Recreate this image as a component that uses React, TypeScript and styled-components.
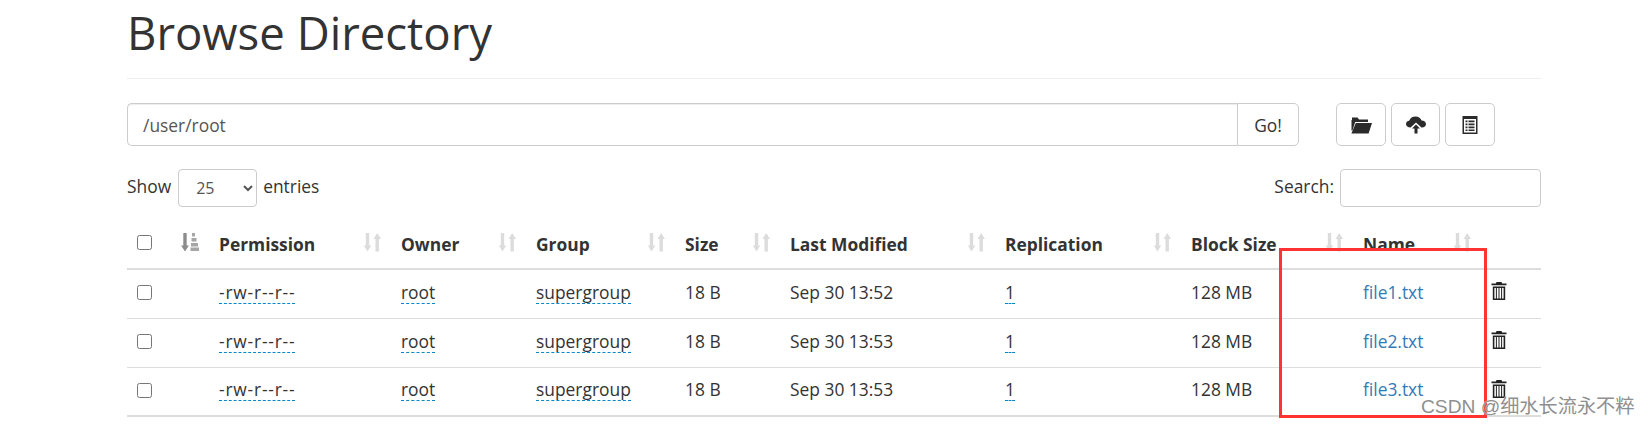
import React from "react";
import styled, { createGlobalStyle } from "styled-components";

const files = [
  { name: "file1.txt", modified: "Sep 30 13:52" },
  { name: "file2.txt", modified: "Sep 30 13:53" },
  { name: "file3.txt", modified: "Sep 30 13:53" },
];

const columns = [
  { label: "Permission", width: 182 },
  { label: "Owner", width: 135 },
  { label: "Group", width: 149 },
  { label: "Size", width: 105 },
  { label: "Last Modified", width: 215 },
  { label: "Replication", width: 186 },
  { label: "Block Size", width: 172 },
  { label: "Name", width: 128 },
];

const SortIcon = () => (
  <SortSvg viewBox="0 0 17 19">
    <path d="M1.800 0h3.400v12.500H7.200L3.500 18.500 -.2 12.500h2z" />
    <path d="M11.500 18.500h3.400V6h2.100L13.200 0 9.500 6h2z" />
  </SortSvg>
);

const SortedIcon = () => (
  <SortedSvg viewBox="0 0 18 19">
    <path d="M2.300 0h3.400v12.500h2.200L4 18.500 .1 12.500h2.200z" fill="#8c8c8c" />
    <path d="M11 0h3v3.500h-3zM10.500 5h5v3.500h-5zM10 10h7v3.500h-7zM9.500 14.500h8.500v3.500H9.500z" fill="#a6a6a6" />
  </SortedSvg>
);

const FolderIcon = () => (
  <ToolSvg viewBox="0 0 22 18">
    <path d="M2 4V1.500h5.500L9 3.500h9V6H5.200L2.400 14.500H1.500V4z" />
    <path d="M5.800 7H22l-3.400 10.500H1.400z" />
  </ToolSvg>
);

const CloudIcon = () => (
  <ToolSvg viewBox="0 0 20 18">
    <path d="M4.500 11.500C2 11.500 0 10 0 8 0 6.400 1.400 5 3.200 4.800 4 2 6.600.5 9.600.5c3 0 5.300 1.700 6 4 2.500.2 4.400 1.600 4.400 3.500 0 2-1.700 3.500-4 3.500h-.6L10 6.500 4.600 11.500z" />
    <path d="M10 8.500l4 4h-2.500v5H8.500v-5H6z" />
  </ToolSvg>
);

const ListIcon = () => (
  <ToolSvg viewBox="0 0 18 18">
    <path
      fillRule="evenodd"
      d="M1.500 0h15v18h-15zM3 3v13.500h12V3zM4.500 4.500h2v1.800h-2zM7.500 4.500h6v1.800h-6zM4.500 7.500h2v1.800h-2zM7.500 7.500h6v1.800h-6zM4.500 10.500h2v1.800h-2zM7.500 10.500h6v1.800h-6zM4.500 13.500h2v1.500h-2zM7.500 13.500h6v1.500h-6z"
    />
  </ToolSvg>
);

const TrashIcon = () => (
  <TrashSvg viewBox="0 0 16 18">
    <path d="M5.500 0h5l.6 1.500H15.500v1.800H.5V1.500h4.400z" />
    <path
      fillRule="evenodd"
      d="M1.800 4.500h12.400V18H1.800zM3.400 6v10.500h1.500V6zM5.900 6v10.500h1.600V6zM8.500 6v10.500h1.600V6zM11.100 6v10.500h1.500V6z"
    />
  </TrashSvg>
);

export default function App() {
  return (
    <Page>
      <GlobalStyle />
      <Title>Browse Directory</Title>
      <Rule />

      <Toolbar>
        <PathGroup>
          <PathInput defaultValue="/user/root" />
          <GoButton>Go!</GoButton>
        </PathGroup>
        <ToolButtons>
          <ToolButton $width={50}>
            <FolderIcon />
          </ToolButton>
          <ToolButton $width={49}>
            <CloudIcon />
          </ToolButton>
          <ToolButton $width={50}>
            <ListIcon />
          </ToolButton>
        </ToolButtons>
      </Toolbar>

      <Controls>
        <ControlLabel>
          Show
          <EntriesSelect defaultValue="25">
            <option>25</option>
            <option>50</option>
            <option>100</option>
          </EntriesSelect>
          entries
        </ControlLabel>
        <ControlLabel>
          Search:
          <SearchInput />
        </ControlLabel>
      </Controls>

      <Table>
        <colgroup>
          <col width={44} />
          <col width={38} />
          {columns.map((c) => (
            <col key={c.label} width={c.width} />
          ))}
          <col width={60} />
        </colgroup>
        <thead>
          <tr>
            <HeadCell>
              <Check type="checkbox" />
            </HeadCell>
            <HeadCell>
              <SortedIcon />
            </HeadCell>
            {columns.map((c) => (
              <HeadCell key={c.label}>
                <HeadInner>
                  {c.label}
                  <SortIcon />
                </HeadInner>
              </HeadCell>
            ))}
            <HeadCell />
          </tr>
        </thead>
        <tbody>
          {files.map((f) => (
            <tr key={f.name}>
              <Cell>
                <RowCheck type="checkbox" />
              </Cell>
              <Cell />
              <Cell>
                <PermissionText>-rw-r--r--</PermissionText>
              </Cell>
              <Cell>
                <Editable>root</Editable>
              </Cell>
              <Cell>
                <Editable>supergroup</Editable>
              </Cell>
              <Cell>18 B</Cell>
              <Cell>{f.modified}</Cell>
              <Cell>
                <Editable>1</Editable>
              </Cell>
              <Cell>128 MB</Cell>
              <Cell>
                <FileLink href="#">{f.name}</FileLink>
              </Cell>
              <Cell>
                <TrashIcon />
              </Cell>
            </tr>
          ))}
        </tbody>
      </Table>

      <Highlight />
      <Watermark>CSDN @细水长流永不粹</Watermark>
    </Page>
  );
}

const GlobalStyle = createGlobalStyle`
  html, body {
    margin: 0;
    background: #fff;
  }
  body {
    font-family: "Open Sans", "Noto Sans", "Liberation Sans", sans-serif;
    font-size: 17.4px;
    color: #333;
  }
`;

const Page = styled.div`
  position: relative;
  width: 1652px;
  height: 426px;
  box-sizing: border-box;
  padding: 0 111px 0 127px;
  overflow: hidden;
`;

const Title = styled.h1`
  margin: 0;
  padding-top: 2px;
  height: 78px;
  box-sizing: border-box;
  font-size: 45.5px;
  line-height: 60px;
  font-weight: 400;
  color: #333;
`;

const Rule = styled.hr`
  margin: 0 0 24px;
  border: 0;
  border-top: 1px solid #eee;
`;

const Toolbar = styled.div`
  display: flex;
  height: 43px;
`;

const PathGroup = styled.div`
  display: flex;
  width: 1172px;
`;

const PathInput = styled.input`
  flex: 1;
  min-width: 0;
  box-sizing: border-box;
  padding: 0 15px;
  border: 1px solid #ccc;
  border-right: 0;
  border-radius: 5px 0 0 5px;
  box-shadow: inset 0 1px 1px rgba(0, 0, 0, 0.075);
  font: inherit;
  color: #555;
  outline: none;
`;

const GoButton = styled.button`
  width: 62px;
  box-sizing: border-box;
  border: 1px solid #ccc;
  border-radius: 0 5px 5px 0;
  background: #fff;
  font: inherit;
  color: #333;
`;

const ToolButtons = styled.div`
  display: flex;
  gap: 5px;
  margin-left: 37px;
`;

const ToolButton = styled.button<{ $width: number }>`
  display: flex;
  align-items: center;
  justify-content: center;
  width: ${(p) => p.$width}px;
  padding: 0;
  border: 1px solid #ccc;
  border-radius: 5px;
  background: #fff;
`;

const ToolSvg = styled.svg`
  width: 22px;
  height: 18px;
  fill: #2b2b2b;
`;

const Controls = styled.div`
  display: flex;
  justify-content: space-between;
  margin-top: 23px;
  height: 38px;
`;

const ControlLabel = styled.label`
  display: flex;
  align-items: center;
  gap: 6px;
  padding-bottom: 5px;
  height: 38px;
  box-sizing: border-box;
  color: #333;
`;

const EntriesSelect = styled.select`
  width: 79px;
  height: 38px;
  margin: 0 0 -5px 1px;
  box-sizing: border-box;
  padding: 0 13px;
  border: 1px solid #ccc;
  border-radius: 4px;
  background: #fff;
  font: inherit;
  font-size: 16px;
  color: #555;
`;

const SearchInput = styled.input`
  width: 201px;
  height: 38px;
  margin-bottom: -5px;
  box-sizing: border-box;
  border: 1px solid #ccc;
  border-radius: 4px;
  outline: none;
`;

const Table = styled.table`
  width: 1414px;
  margin-top: 8px;
  border-collapse: collapse;
  table-layout: fixed;
  border-bottom: 2px solid #ddd;
`;

const HeadCell = styled.th`
  height: 54px;
  box-sizing: border-box;
  padding: 12px 10px 8px;
  border-bottom: 2px solid #ddd;
  text-align: left;
  vertical-align: middle;
  font-weight: 700;
  color: #333;
`;

const HeadInner = styled.div`
  display: flex;
  align-items: flex-start;
  justify-content: space-between;
`;

const SortSvg = styled.svg`
  flex: none;
  width: 17px;
  height: 19px;
  margin-top: 1px;
  margin-bottom: -1px;
  fill: #dcdcdc;
`;

const SortedSvg = styled.svg`
  display: block;
  width: 18px;
  height: 19px;
  margin-top: -2px;
`;

const Cell = styled.td`
  height: 49px;
  box-sizing: border-box;
  padding: 0 10px 4px;
  border-top: 1px solid #ddd;
  color: #333;
`;

const Check = styled.input`
  display: block;
  width: 15px;
  height: 15px;
  margin: -2px 0 0 0;
`;

const RowCheck = styled(Check)`
  margin: 2px 0 0 0;
`;

const Editable = styled.span`
  display: inline-block;
  line-height: 22px;
  border-bottom: 1px dashed #08c;
`;

const PermissionText = styled(Editable)`
  letter-spacing: 0.8px;
`;

const FileLink = styled.a`
  color: #337ab7;
  text-decoration: none;
`;

const TrashSvg = styled.svg`
  display: block;
  width: 16px;
  height: 18px;
  margin-top: -1px;
  fill: #222;
`;

const Highlight = styled.div`
  position: absolute;
  left: 1279px;
  top: 248px;
  width: 208px;
  height: 170px;
  box-sizing: border-box;
  border: 3px solid #f33;
`;

const Watermark = styled.div`
  position: absolute;
  left: 1421px;
  top: 396px;
  font-family: "Liberation Sans", "Noto Sans CJK SC", sans-serif;
  font-size: 19.2px;
  line-height: 22px;
  color: #8f8f8f;
  text-shadow: 0 0 1px #fff;
  white-space: nowrap;
`;
